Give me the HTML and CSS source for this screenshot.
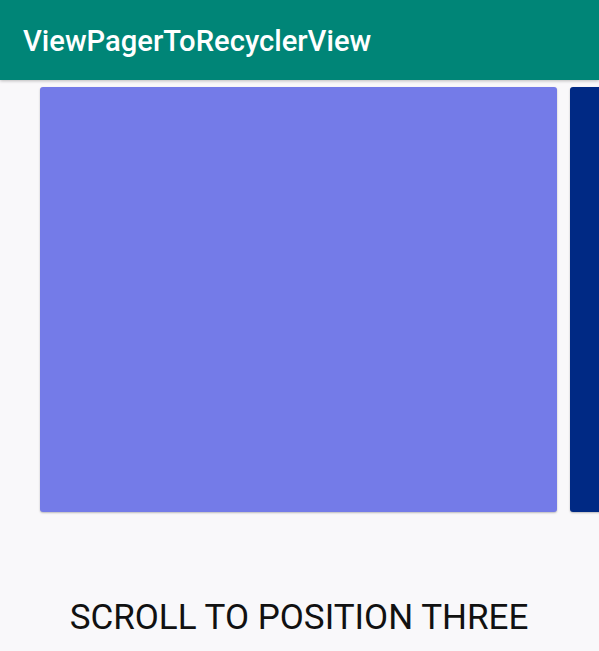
FILE: index.html
```html
<!DOCTYPE html>
<html>
<head>
<meta charset="utf-8">
<link rel="stylesheet" href="styles.css">
</head>
<body>
<div class="screen">
  <header class="appbar"><span class="title">ViewPagerToRecyclerView</span></header>
  <div class="pager">
    <div class="card card-one"></div>
    <div class="card card-two"></div>
  </div>
  <div class="action">SCROLL TO POSITION THREE</div>
</div>
</body>
</html>
```

FILE: styles.css
```css
html, body {
  margin: 0;
  padding: 0;
  background: #f9f8fa;
  font-family: Roboto, "Noto Sans", sans-serif;
}
.screen {
  width: 599px;
  height: 651px;
  overflow: hidden;
  display: flex;
  flex-direction: column;
}
.appbar {
  height: 80px;
  background: #008577;
  display: flex;
  align-items: center;
  padding-left: 23px;
  box-shadow: 0 1px 3px rgba(0,0,0,0.25);
  flex-shrink: 0;
}
.title {
  color: #ffffff;
  font-size: 29.2px;
  font-weight: 500;
  margin-top: 2px;
}
.pager {
  display: flex;
  gap: 13px;
  padding-left: 40px;
  margin-top: 7px;
  height: 425px;
  flex-shrink: 0;
}
.card {
  flex-shrink: 0;
  height: 425px;
  border-radius: 3px;
  box-shadow: 0 1px 2px rgba(0,0,0,0.25);
}
.card-one {
  width: 517px;
  background: #747be8;
}
.card-two {
  width: 517px;
  background: #002984;
}
.action {
  margin-top: 85px;
  text-align: center;
  font-size: 35px;
  color: #111111;
  padding-right: 1px;
}
```
